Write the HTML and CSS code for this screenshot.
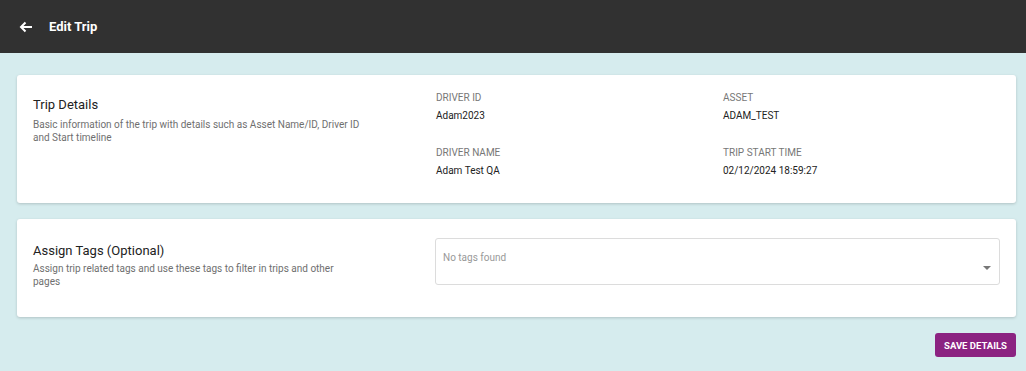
FILE: index.html
```html
<!DOCTYPE html>
<html>
<head>
<meta charset="utf-8">
<link rel="stylesheet" href="styles.css">
</head>
<body>
<header class="topbar">
  <svg class="back" width="14" height="12" viewBox="0 0 14 12"><path d="M13 6H2M6.5 1.5L2 6l4.5 4.5" fill="none" stroke="#fff" stroke-width="2"/></svg>
  <span class="title">Edit Trip</span>
</header>
<main class="page">
  <section class="card card-details">
    <div class="intro">
      <h2 class="intro-title">Trip Details</h2>
      <p class="intro-desc">Basic information of the trip with details such as Asset Name/ID, Driver ID and Start timeline</p>
    </div>
    <div class="fields">
      <div class="field"><div class="label">DRIVER ID</div><div class="value">Adam2023</div></div>
      <div class="field"><div class="label">ASSET</div><div class="value">ADAM_TEST</div></div>
      <div class="field"><div class="label">DRIVER NAME</div><div class="value">Adam Test QA</div></div>
      <div class="field"><div class="label">TRIP START TIME</div><div class="value">02/12/2024 18:59:27</div></div>
    </div>
  </section>
  <section class="card card-tags">
    <div class="intro">
      <h2 class="intro-title">Assign Tags (Optional)</h2>
      <p class="intro-desc">Assign trip related tags and use these tags to filter in trips and other pages</p>
    </div>
    <div class="select">
      <span class="placeholder">No tags found</span>
      <span class="caret"></span>
    </div>
  </section>
  <div class="actions">
    <button class="save">SAVE DETAILS</button>
  </div>
</main>
</body>
</html>
```
FILE: styles.css
```css
* { box-sizing: border-box; }
html, body { margin: 0; padding: 0; }
body {
  background: #d6ecee;
  font-family: Roboto, "Liberation Sans", sans-serif;
  width: 1026px;
  height: 371px;
  overflow: hidden;
}
.topbar {
  height: 53px;
  background: #313131;
  display: flex;
  align-items: center;
  padding-left: 19px;
}
.back { display: block; margin-right: 16px; }
.title { color: #fff; font-size: 13px; font-weight: 700; }
.page { padding: 22px 10px 0 17px; }
.card {
  width: 999px;
  background: #fff;
  border-radius: 3px;
  box-shadow: 0 1px 3px rgba(0,0,0,0.18);
  display: flex;
  padding: 0 16px;
}
.card-details { height: 128px; padding-top: 22px; }
.card-tags { height: 98px; margin-top: 16px; padding-top: 19px; }
.intro { width: 402px; }
.intro-title {
  margin: 0;
  font-size: 13px;
  font-weight: 400;
  color: #222;
  line-height: 16px;
}
.intro-desc {
  margin: 5px 0 0;
  font-size: 10px;
  line-height: 13px;
  color: #6f6f6f;
  max-width: 345px;
}
.fields {
  flex: 1;
  display: grid;
  grid-template-columns: 287px 1fr;
  grid-auto-rows: min-content;
  row-gap: 25px;
  padding-left: 1px;
  margin-top: -5px;
}
.label { font-size: 10px; color: #777; line-height: 12px; }
.value { font-size: 10px; color: #222; font-weight: 400; line-height: 12px; margin-top: 6px; }
.card-tags .intro { padding-top: 5px; }
.card-tags .intro-desc { margin-top: 3px; max-width: 315px; }
.select {
  flex: 1;
  height: 47px;
  border: 1px solid #dcdcdc;
  border-radius: 3px;
  position: relative;
  padding: 7px 7px;
}
.placeholder { font-size: 10px; color: #999; }
.caret {
  position: absolute;
  right: 8px;
  top: 27px;
  width: 0; height: 0;
  border-left: 4px solid transparent;
  border-right: 4px solid transparent;
  border-top: 4px solid #777;
}
.actions { width: 999px; display: flex; justify-content: flex-end; margin-top: 16px; }
.save {
  background: #8b2381;
  color: #fff;
  border: none;
  border-radius: 3px;
  height: 24px;
  width: 81px;
  font-family: inherit;
  font-size: 9.5px;
  font-weight: 700;
  padding: 0;
}
```
